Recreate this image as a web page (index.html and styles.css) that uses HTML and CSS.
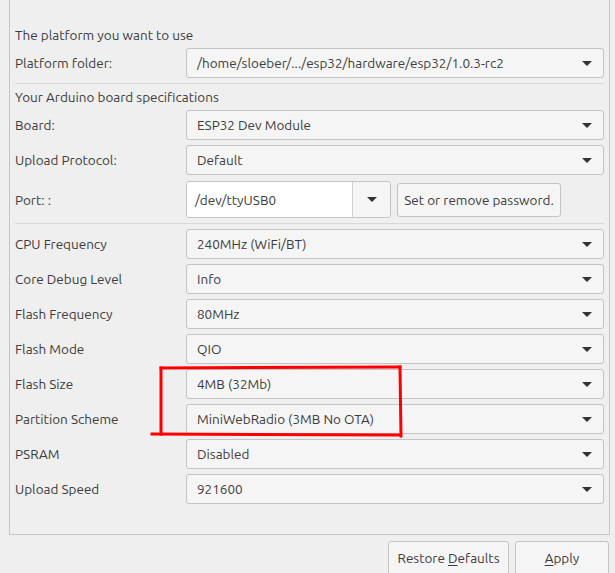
FILE: index.html
```html
<!DOCTYPE html>
<html>
<head>
<meta charset="utf-8">
<link rel="stylesheet" href="styles.css">
</head>
<body>
<div class="panel">
  <div class="group-title">The platform you want to use</div>
  <div class="row">
    <div class="label">Platform folder:</div>
    <div class="combo"><span class="val">/home/sloeber/.../esp32/hardware/esp32/1.0.3-rc2</span><span class="arrow"></span></div>
  </div>
  <div class="sep"></div>
  <div class="group-title">Your Arduino board specifications</div>
  <div class="row">
    <div class="label">Board:</div>
    <div class="combo"><span class="val">ESP32 Dev Module</span><span class="arrow"></span></div>
  </div>
  <div class="row">
    <div class="label">Upload Protocol:</div>
    <div class="combo"><span class="val">Default</span><span class="arrow"></span></div>
  </div>
  <div class="row port-row">
    <div class="label">Port: :</div>
    <div class="edit-combo">
      <span class="edit">/dev/ttyUSB0</span>
      <span class="drop"><span class="arrow"></span></span>
    </div>
    <div class="btn pw"><span>Set or remove password.</span></div>
  </div>
  <div class="sep"></div>
  <div class="row">
    <div class="label">CPU Frequency</div>
    <div class="combo"><span class="val">240MHz (WiFi/BT)</span><span class="arrow"></span></div>
  </div>
  <div class="row">
    <div class="label">Core Debug Level</div>
    <div class="combo"><span class="val">Info</span><span class="arrow"></span></div>
  </div>
  <div class="row">
    <div class="label">Flash Frequency</div>
    <div class="combo"><span class="val">80MHz</span><span class="arrow"></span></div>
  </div>
  <div class="row">
    <div class="label">Flash Mode</div>
    <div class="combo"><span class="val">QIO</span><span class="arrow"></span></div>
  </div>
  <div class="row">
    <div class="label">Flash Size</div>
    <div class="combo"><span class="val">4MB (32Mb)</span><span class="arrow"></span></div>
  </div>
  <div class="row">
    <div class="label">Partition Scheme</div>
    <div class="combo"><span class="val">MiniWebRadio (3MB No OTA)</span><span class="arrow"></span></div>
  </div>
  <div class="row">
    <div class="label">PSRAM</div>
    <div class="combo"><span class="val">Disabled</span><span class="arrow"></span></div>
  </div>
  <div class="row">
    <div class="label">Upload Speed</div>
    <div class="combo"><span class="val">921600</span><span class="arrow"></span></div>
  </div>
</div>
<div class="buttons">
  <div class="btn restore"><span>Restore <u>D</u>efaults</span></div>
  <div class="btn apply"><span><u>A</u>pply</span></div>
</div>
<svg class="annot" width="615" height="573" viewBox="0 0 615 573">
  <g stroke="#f00" stroke-width="3" fill="none" stroke-linecap="square">
    <path d="M161 368 L400 367"/>
    <path d="M161 368 L161 434"/>
    <path d="M152 434 L400 435"/>
    <path d="M400 367 L401 436"/>
  </g>
</svg>
</body>
</html>
```
FILE: styles.css
```css
html, body {
  margin: 0;
  padding: 0;
}
body {
  width: 615px;
  height: 573px;
  overflow: hidden;
  background: #efefef;
  font-family: "Ubuntu", "Open Sans", "Noto Sans", sans-serif;
  font-size: 13.5px;
  color: #3c3c3c;
  position: relative;
}
.panel {
  margin-left: 9px;
  width: 589px;
  height: 507px;
  padding: 27px 5px 0 5px;
  border: 1px solid #c6c6c6;
  border-top: none;
}
.group-title {
  height: 17px;
  line-height: 17px;
  margin-bottom: 4px;
}
.row {
  display: flex;
  align-items: center;
  height: 30px;
  margin-bottom: 5px;
}
.label {
  width: 171px;
  flex: none;
}
.combo {
  flex: 1;
  height: 28px;
  box-sizing: content-box;
  border: 1px solid #c4c4c4;
  border-radius: 3px;
  background: #f5f5f5;
  display: flex;
  align-items: center;
  padding: 0 11px 0 10px;
}
.combo .val {
  flex: 1;
}
.arrow {
  width: 0;
  height: 0;
  border-left: 5px solid transparent;
  border-right: 5px solid transparent;
  border-top: 5px solid #333;
}
.port-row {
  height: 37px;
  margin-top: 6px;
}
.edit-combo {
  width: 203px;
  height: 35px;
  border: 1px solid #c4c4c4;
  border-radius: 3px;
  display: flex;
  overflow: hidden;
}
.edit {
  flex: 1;
  background: #fff;
  padding-left: 8px;
  display: flex;
  align-items: center;
  border-right: 1px solid #d0d0d0;
}
.drop {
  width: 37px;
  background: #f5f5f5;
  display: flex;
  align-items: center;
  justify-content: center;
}
.btn {
  border: 1px solid #c4c4c4;
  border-radius: 3px;
  background: #f5f5f5;
  display: flex;
  align-items: center;
  justify-content: center;
  box-sizing: border-box;
  white-space: nowrap;
}
.pw {
  margin-left: 6px;
  width: 164px;
  height: 34px;
}
.sep {
  height: 1px;
  background: #d8d8d8;
  margin: 0 0 5px 0;
}
.buttons {
  display: flex;
  justify-content: flex-end;
  gap: 6px;
  margin-top: 6px;
  margin-right: 6px;
}
.restore {
  width: 121px;
  height: 38px;
  padding-bottom: 4px;
}
.apply {
  width: 94px;
  height: 38px;
  padding-bottom: 4px;
}
.btn u {
  text-decoration-thickness: 1px;
  text-underline-offset: 2px;
}
.annot {
  position: absolute;
  left: 0;
  top: 0;
  pointer-events: none;
}
```
